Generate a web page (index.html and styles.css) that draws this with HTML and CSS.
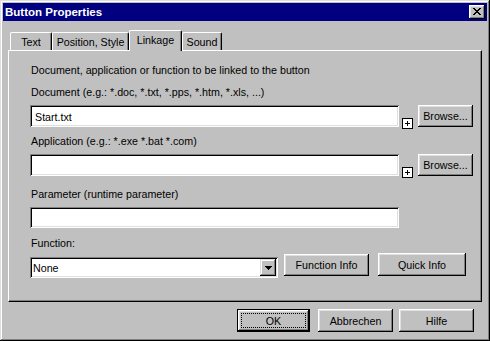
FILE: index.html
```html
<!DOCTYPE html>
<html>
<head>
<meta charset="utf-8">
<title>Button Properties</title>
<link rel="stylesheet" href="styles.css">
</head>
<body>
<div class="window">
  <div class="titlebar">
    <span class="title">Button Properties</span>
    <div class="close">
      <svg width="8" height="7" viewBox="0 0 8 7" shape-rendering="crispEdges"><path d="M0 0h2v1H0zM6 0h2v1H6zM1 1h2v1H1zM5 1h2v1H5zM2 2h4v1H2zM3 3h2v1H3zM2 4h4v1H2zM1 5h2v1H1zM5 5h2v1H5zM0 6h2v1H0zM6 6h2v1H6z" fill="#000"/></svg>
    </div>
  </div>
  <div class="main">
    <div class="tabs">
      <div class="tab tab-text">Text</div>
      <div class="tab tab-pos">Position, Style</div>
      <div class="tab tab-link active">Linkage</div>
      <div class="tab tab-sound">Sound</div>
    </div>
    <div class="panel">
      <div class="line intro">Document, application or function to be linked to the button</div>
      <div class="line label-doc">Document (e.g.: *.doc, *.txt, *.pps, *.htm, *.xls, ...)</div>
      <div class="row row-doc">
        <div class="field path"><span class="value">Start.txt</span></div>
        <span class="plus"><svg width="11" height="11" viewBox="0 0 11 11" shape-rendering="crispEdges"><rect x="0.5" y="0.5" width="10" height="10" fill="#fff" stroke="#000"/><path d="M3 5h5v1H3zM5 3h1v5H5z" fill="#000"/></svg></span>
        <div class="btn browse">Browse...</div>
      </div>
      <div class="line label-app">Application (e.g.: *.exe *.bat *.com)</div>
      <div class="row row-app">
        <div class="field path"></div>
        <span class="plus"><svg width="11" height="11" viewBox="0 0 11 11" shape-rendering="crispEdges"><rect x="0.5" y="0.5" width="10" height="10" fill="#fff" stroke="#000"/><path d="M3 5h5v1H3zM5 3h1v5H5z" fill="#000"/></svg></span>
        <div class="btn browse">Browse...</div>
      </div>
      <div class="line label-param">Parameter (runtime parameter)</div>
      <div class="field path param"></div>
      <div class="line label-func">Function:</div>
      <div class="row row-func">
        <div class="field select">
          <span class="value">None</span>
          <span class="arrow"><svg width="7" height="4" viewBox="0 0 7 4" shape-rendering="crispEdges"><path d="M0 0h7v1H0zM1 1h5v1H1zM2 2h3v1H2zM3 3h1v1H3z" fill="#000"/></svg></span>
        </div>
        <div class="btn func-info">Function Info</div>
        <div class="btn quick-info">Quick Info</div>
      </div>
    </div>
    <div class="footer">
      <div class="btn default ok"><span class="focus">OK</span></div>
      <div class="btn cancel">Abbrechen</div>
      <div class="btn help">Hilfe</div>
    </div>
  </div>
</div>
</body>
</html>
```

FILE: styles.css
```css
html, body {
  margin: 0;
  padding: 0;
  background: #c0c0c0;
}

body {
  font-family: "Liberation Sans", Arial, sans-serif;
  font-size: 10.7px;
  color: #000;
}

.window {
  width: 490px;
  height: 341px;
  box-sizing: border-box;
  padding: 3px;
  display: flex;
  flex-direction: column;
  background: #c0c0c0;
  box-shadow: inset -1px -1px #000, inset 1px 1px #dfdfdf, inset -2px -2px #808080, inset 2px 2px #fff;
}

.titlebar {
  height: 18px;
  flex: none;
  background: #000080;
  color: #fff;
  display: flex;
  align-items: center;
  justify-content: space-between;
  padding: 0 2px 0 2px;
}

.title {
  font-weight: bold;
  font-size: 11.5px;
}

.close {
  width: 16px;
  height: 14px;
  box-sizing: border-box;
  background: #c0c0c0;
  box-shadow: inset -1px -1px #000, inset 1px 1px #fff, inset -2px -2px #808080, inset 2px 2px #dfdfdf;
  display: flex;
  align-items: center;
  justify-content: center;
  padding-bottom: 1px;
}

.close svg { display: block; }

.main {
  flex: 1;
  padding: 9px 5px 0 5px;
  display: flex;
  flex-direction: column;
}

.tabs {
  display: flex;
  align-items: flex-end;
  height: 20px;
  margin-left: 2px;
  position: relative;
  z-index: 1;
}

.tab {
  box-sizing: border-box;
  height: 18px;
  border-top: 1px solid #fff;
  border-left: 1px solid #fff;
  border-right: 1px solid #000;
  box-shadow: inset -1px 0 #808080;
  border-radius: 2px 2px 0 0;
  background: #c0c0c0;
  display: flex;
  align-items: center;
  justify-content: center;
  white-space: nowrap;
}

.tab-text { width: 42px; }
.tab-pos { width: 77px; }
.tab-link { width: 53px; }
.tab-sound { width: 40px; }

.tab.active {
  height: 21px;
  margin-bottom: -1px;
  padding-bottom: 2px;
}

.panel {
  box-sizing: border-box;
  width: 474px;
  height: 252px;
  flex: none;
  border: 1px solid;
  border-color: #fff #000 #000 #fff;
  box-shadow: inset -1px -1px #808080;
  padding: 13px 0 0 21px;
  display: flex;
  flex-direction: column;
  align-items: flex-start;
}

.line {
  line-height: 13px;
  height: 13px;
  white-space: nowrap;
  padding-left: 1px;
}

.label-doc { margin-top: 9px; }
.row-doc { margin-top: 6px; }
.label-app { margin-top: 8px; }
.row-app { margin-top: 6px; }
.label-param { margin-top: 12px; }
.param { margin-top: 6px; }
.label-func { margin-top: 9px; }
.row-func { margin-top: 3px; }

.row {
  display: flex;
  align-items: flex-start;
}

.field {
  box-sizing: border-box;
  background: #fff;
  box-shadow: inset 1px 1px #808080, inset -1px -1px #fff, inset 2px 2px #000, inset -2px -2px #dfdfdf;
}

.path {
  width: 369px;
  height: 22px;
  display: flex;
  align-items: center;
  padding: 2px 4px 0 5px;
}

.param {
  height: 21px;
}

.plus {
  display: block;
  width: 11px;
  height: 11px;
  margin: 13px 0 -2px 3px;
}

.plus svg { display: block; }

.btn {
  box-sizing: border-box;
  height: 22px;
  background: #c0c0c0;
  box-shadow: inset -1px -1px #000, inset 1px 1px #fff, inset -2px -2px #808080, inset 2px 2px #dfdfdf;
  display: flex;
  align-items: center;
  justify-content: center;
  white-space: nowrap;
}

.browse {
  width: 55px;
  margin-left: 5px;
}

.select {
  width: 248px;
  height: 21px;
  margin-top: 4px;
  display: flex;
  align-items: stretch;
  padding: 2px;
}

.select .value {
  flex: 1;
  display: flex;
  align-items: center;
  padding-left: 1px;
}

.arrow {
  width: 16px;
  box-sizing: border-box;
  background: #c0c0c0;
  box-shadow: inset -1px -1px #000, inset 1px 1px #dfdfdf, inset -2px -2px #808080, inset 2px 2px #fff;
  display: flex;
  align-items: center;
  justify-content: center;
}

.arrow svg { display: block; }

.func-info {
  width: 85px;
  margin-left: 6px;
  margin-top: 1px;
}

.quick-info {
  width: 88px;
  height: 23px;
  margin-left: 9px;
}

.footer {
  display: flex;
  justify-content: flex-end;
  margin-top: 7px;
  padding-right: 8px;
}

.footer .btn {
  height: 23px;
}

.ok {
  width: 73px;
  margin-right: 8px;
  border: 1px solid #000;
  padding: 3px;
}

.ok .focus {
  flex: 1;
  align-self: stretch;
  border: 1px dotted #000;
  display: flex;
  align-items: center;
  justify-content: center;
}

.cancel {
  width: 75px;
  margin-right: 6px;
}

.help {
  width: 75px;
}
```
